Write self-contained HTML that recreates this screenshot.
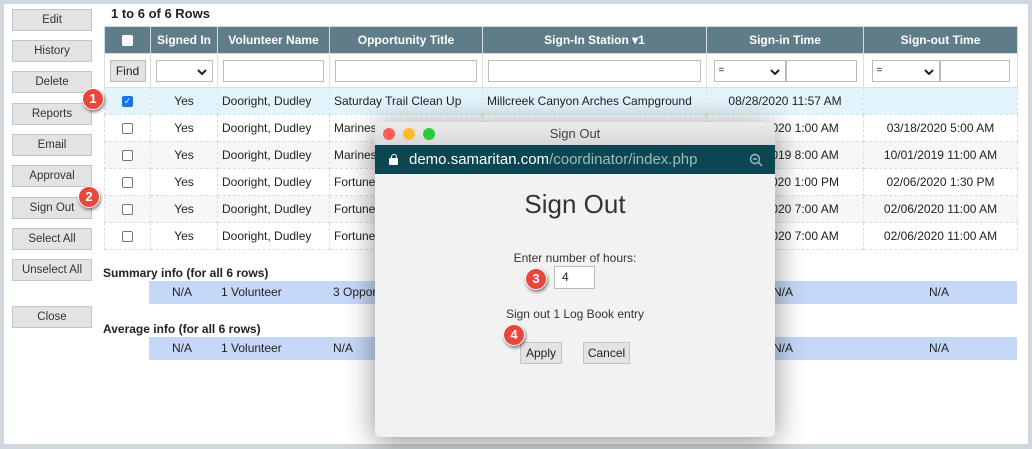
<!DOCTYPE html>
<html><head><meta charset="utf-8"><style>
*{box-sizing:border-box;margin:0;padding:0}
body{width:1032px;height:449px;background:#cfd8de;font-family:"Liberation Sans",sans-serif;font-size:12px;color:#222;position:relative;overflow:hidden}
#page{position:absolute;left:4px;top:4px;width:1024px;height:440px;background:#fff}
.btn{position:absolute;left:12px;width:80px;height:22px;background:#e3e3e3;border:1px solid #c4c4c4;text-align:center;line-height:20px;font-size:11.5px;color:#333}
.abs{position:absolute}
table{position:absolute;left:104px;top:26px;border-collapse:collapse;width:913px;table-layout:fixed}
th{background:#5f7c89;color:#fff;font-weight:bold;height:27px;border:1px solid #d5dce0;font-size:12px}
td{height:27px;border:1px dashed #ddd;text-align:center;font-size:12px;color:#222;white-space:nowrap;overflow:hidden}
tr.f td{height:34px;border:1px solid #ddd}
tr.sel td{background:#e3f4fc}
tr.g td{background:#f7f7f7}
td.l{text-align:left;padding-left:4px}
.inp{display:inline-block;height:22px;border:1px solid #bbb;background:#fff;vertical-align:middle;position:relative}
.inp svg{position:absolute;right:5px;top:8px}
.cb{display:inline-block;width:11px;height:11px;border:1px solid #777;border-radius:2px;background:#fff;vertical-align:middle}
.badge{position:absolute;width:22px;height:22px;border-radius:50%;background:#e9473d;border:1.5px solid #fff;color:#fff;font-weight:bold;font-size:13px;text-align:center;line-height:19px;box-shadow:1px 2px 3px rgba(0,0,0,.5)}
.bar{position:absolute;left:149px;width:868px;height:23px;background:#c6d8f8;font-size:12px;line-height:23px}
.bar span{position:absolute}
</style></head><body>
<div id="page"></div>
<div class="btn" style="top:9px">Edit</div>
<div class="btn" style="top:40px">History</div>
<div class="btn" style="top:71px">Delete</div>
<div class="btn" style="top:103px">Reports</div>
<div class="btn" style="top:134px">Email</div>
<div class="btn" style="top:165px">Approval</div>
<div class="btn" style="top:197px">Sign Out</div>
<div class="btn" style="top:228px">Select All</div>
<div class="btn" style="top:259px">Unselect All</div>
<div class="btn" style="top:306px">Close</div>
<div class="abs" style="left:111px;top:6px;font-weight:bold;font-size:13px">1 to 6 of 6 Rows</div>
<table>
<colgroup><col style="width:46px"><col style="width:67px"><col style="width:112px"><col style="width:153px"><col style="width:224px"><col style="width:157px"><col style="width:154px"></colgroup>
<tr><th><span class="cb" style="border-color:#fff"></span></th><th>Signed In</th><th>Volunteer Name</th><th>Opportunity Title</th><th>Sign-In Station ▾1</th><th>Sign-in Time</th><th>Sign-out Time</th></tr>
<tr class="f"><td><span class="inp" style="width:36px;background:#e3e3e3;line-height:20px;font-size:12px">Find</span></td><td><span class="inp" style="width:57px"><svg width="10" height="6"><path d="M1 1 L5 5 L9 1" fill="none" stroke="#222" stroke-width="2"/></svg></span></td><td><span class="inp" style="width:101px"></span></td><td><span class="inp" style="width:142px"></span></td><td><span class="inp" style="width:213px"></span></td><td><span class="inp" style="width:72px;font-size:10px;line-height:20px;text-align:left;padding-left:4px">=<svg width="10" height="6"><path d="M1 1 L5 5 L9 1" fill="none" stroke="#222" stroke-width="2"/></svg></span><span class="inp" style="width:71px"></span></td><td><span class="inp" style="width:68px;font-size:10px;line-height:20px;text-align:left;padding-left:4px">=<svg width="10" height="6"><path d="M1 1 L5 5 L9 1" fill="none" stroke="#222" stroke-width="2"/></svg></span><span class="inp" style="width:70px"></span></td></tr>
<tr class="sel"><td><span class="cb" style="background:#1a73e8;border-color:#1a73e8;color:#fff;font-size:9px;line-height:9px">✓</span></td><td>Yes</td><td class="l">Dooright, Dudley</td><td class="l">Saturday Trail Clean Up</td><td class="l">Millcreek Canyon Arches Campground</td><td>08/28/2020 11:57 AM</td><td></td></tr>
<tr><td><span class="cb"></span></td><td>Yes</td><td class="l">Dooright, Dudley</td><td class="l">Marines</td><td></td><td>03/18/2020 1:00 AM</td><td>03/18/2020 5:00 AM</td></tr>
<tr class="g"><td><span class="cb"></span></td><td>Yes</td><td class="l">Dooright, Dudley</td><td class="l">Marines</td><td></td><td>10/01/2019 8:00 AM</td><td>10/01/2019 11:00 AM</td></tr>
<tr><td><span class="cb"></span></td><td>Yes</td><td class="l">Dooright, Dudley</td><td class="l">Fortune</td><td></td><td>02/06/2020 1:00 PM</td><td>02/06/2020 1:30 PM</td></tr>
<tr class="g"><td><span class="cb"></span></td><td>Yes</td><td class="l">Dooright, Dudley</td><td class="l">Fortune</td><td></td><td>02/06/2020 7:00 AM</td><td>02/06/2020 11:00 AM</td></tr>
<tr><td><span class="cb"></span></td><td>Yes</td><td class="l">Dooright, Dudley</td><td class="l">Fortune</td><td></td><td>02/06/2020 7:00 AM</td><td>02/06/2020 11:00 AM</td></tr>
</table>
<div class="abs" style="left:103px;top:266px;font-weight:bold">Summary info (for all 6 rows)</div>
<div class="bar" style="top:281px"><span style="left:23px">N/A</span><span style="left:72px">1 Volunteer</span><span style="left:184px">3 Opportunities</span><span style="left:624px">N/A</span><span style="left:780px">N/A</span></div>
<div class="abs" style="left:103px;top:322px;font-weight:bold">Average info (for all 6 rows)</div>
<div class="bar" style="top:337px"><span style="left:23px">N/A</span><span style="left:72px">1 Volunteer</span><span style="left:184px">N/A</span><span style="left:624px">N/A</span><span style="left:780px">N/A</span></div>
<div class="abs" style="left:375px;top:122px;width:400px;height:315px;background:#f2f2f2;border-radius:5px;box-shadow:0 4px 30px rgba(0,0,0,.45);overflow:hidden">
 <div style="height:23px;background:linear-gradient(#ececec,#d8d8d8);text-align:center;line-height:23px;font-size:13px;color:#444;position:relative">Sign Out
  <span style="position:absolute;left:8px;top:6px;width:12px;height:12px;border-radius:50%;background:#fc5f57"></span>
  <span style="position:absolute;left:28px;top:6px;width:12px;height:12px;border-radius:50%;background:#fdbc2e"></span>
  <span style="position:absolute;left:48px;top:6px;width:12px;height:12px;border-radius:50%;background:#28c840"></span></div>
 <div style="height:29px;background:#0b4652;color:#fff;font-size:15px;line-height:29px;padding-left:34px;position:relative"><span style="position:absolute;left:14px;top:13px;width:9px;height:7px;background:#fff;border-radius:1px"></span><span style="position:absolute;left:15.5px;top:9px;width:6px;height:6px;border:1.5px solid #fff;border-radius:3px 3px 0 0"></span>demo.samaritan.com<span style="color:#9fbcc3">/coordinator/index.php</span><svg style="position:absolute;right:12px;top:8px" width="14" height="14"><circle cx="6" cy="6" r="4.5" fill="none" stroke="#9fbcc3" stroke-width="1.4"/><path d="M4 6h4M9.5 9.5l3.5 3.5" stroke="#9fbcc3" stroke-width="1.4"/></svg></div>
 <div style="text-align:center;font-size:26px;color:#333;margin-top:15px">Sign Out</div>
 <div style="position:absolute;top:129px;width:100%;text-align:center;font-size:12px;color:#333">Enter number of hours:</div>
 <div style="position:absolute;left:179px;top:144px;width:41px;height:23px;background:#fff;border:1px solid #bbb;font-size:12px;line-height:21px;padding-left:7px">4</div>
 <div style="position:absolute;top:185px;width:100%;text-align:center;font-size:12px;color:#333">Sign out 1 Log Book entry</div>
 <div style="position:absolute;left:145px;top:220px;width:42px;height:22px;background:#e3e3e3;border:1px solid #c4c4c4;text-align:center;line-height:20px;font-size:12px">Apply</div>
 <div style="position:absolute;left:208px;top:220px;width:47px;height:22px;background:#e3e3e3;border:1px solid #c4c4c4;text-align:center;line-height:20px;font-size:12px">Cancel</div>
</div>
<div class="badge" style="left:82px;top:88px">1</div>
<div class="badge" style="left:78px;top:186px">2</div>
<div class="badge" style="left:525px;top:268px">3</div>
<div class="badge" style="left:503px;top:324px">4</div>
</body></html>
